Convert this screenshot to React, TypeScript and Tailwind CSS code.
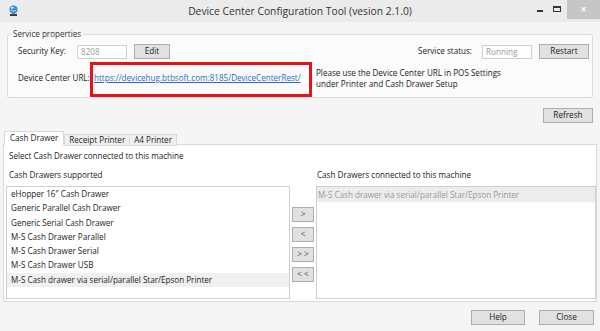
import React from "react";

const supported = [
  "eHopper 16\" Cash Drawer",
  "Generic Parallel Cash Drawer",
  "Generic Serial Cash Drawer",
  "M-S Cash Drawer Parallel",
  "M-S Cash Drawer Serial",
  "M-S Cash Drawer USB",
  "M-S Cash drawer via serial/parallel Star/Epson Printer",
];

function WinButton({ label, className = "" }: { label: string; className?: string }) {
  return (
    <button
      className={`h-[15px] bg-[#e1e1e1] border border-[#adadad] text-[#222] text-[8.2px] leading-none flex items-center justify-center ${className}`}
    >
      {label}
    </button>
  );
}

function AppIcon() {
  return (
    <svg width="11" height="12" viewBox="0 0 11 12">
      <rect x="2" y="9" width="7" height="2" fill="#3a3a3a" />
      <rect x="4.5" y="7" width="2" height="3" fill="#555" />
      <circle cx="5.5" cy="4.5" r="4" fill="#2f8fd8" />
      <path d="M3 3.5c1-1 2.5-1.2 3.5-.4M2.5 5.5c1.5.6 3.5.7 5.5 0" stroke="#bfe3ff" strokeWidth="0.9" fill="none" />
      <circle cx="4" cy="2.8" r="1" fill="#e8f5ff" />
    </svg>
  );
}

export default function App() {
  return (
    <div
      className="w-[600px] h-[331px] overflow-hidden flex flex-col bg-[#f5f5f5] text-[#222] text-[8.1px]"
      style={{ fontFamily: '"Open Sans", "Noto Sans", sans-serif' }}
    >
      {/* title bar */}
      <div className="h-[22px] shrink-0 bg-[#ebebeb] grid grid-cols-[1fr_auto_1fr]">
        <div className="pl-[8px] pt-[5px]">
          <AppIcon />
        </div>
        <div className="text-[10.3px] text-[#333] leading-[23px]">Device Center Configuration Tool (vesion 2.1.0)</div>
        <div className="flex justify-end items-start">
          <div className="w-[16px] h-[19px] flex items-center justify-center">
            <div className="w-[6px] h-[2px] bg-[#333] mt-[3px]" />
          </div>
          <div className="w-[18px] h-[19px] flex items-center justify-center">
            <div className="w-[8px] h-[6px] border border-[#333] border-t-2 -mt-[2px]" />
          </div>
          <div className="w-[33px] h-[19px] ml-[1px] bg-[#c6c6c6] flex items-center justify-center text-white text-[10px] font-bold">
            ×
          </div>
        </div>
      </div>

      <div className="flex-1 flex flex-col px-[3px]">
        {/* service properties */}
        <fieldset className="mt-[6px] mx-[4px] border border-[#dcdcdc] rounded-[2px] bg-[#fbfbfb]">
          <legend className="ml-[3px] px-[2px] leading-[12px] text-[#333]">Service properties</legend>
          <div className="relative pt-[4px] pb-[8px] pl-[10px] pr-[3px]">
            <div className="flex items-center h-[15px]">
              <span className="w-[59px]">Security Key:</span>
              <div className="w-[50px] h-[14px] border border-[#cfcfcf] bg-white text-[#9a9a9a] pl-[3px] leading-[12px]">8208</div>
              <WinButton label="Edit" className="w-[36px] ml-[7px]" />
              <div className="flex-1" />
              <span className="mr-[10px]">Service status:</span>
              <div className="w-[50px] h-[14px] border border-[#cfcfcf] bg-white text-[#9a9a9a] pl-[3px] leading-[12px]">Running</div>
              <WinButton label="Restart" className="w-[50px] ml-[7px]" />
            </div>
            <div className="flex items-center h-[22px] mt-[8px]">
              <span className="w-[76px]">Device Center URL:</span>
              <a className="text-[#2a6ac8] underline w-[222px]">https://devicehug.btbsoft.com:8185/DeviceCenterRest/</a>
              <div className="leading-[11px]">
                <div>Please use the Device Center URL in POS Settings</div>
                <div>under Printer and Cash Drawer Setup</div>
              </div>
            </div>
            <div className="absolute left-[82px] top-[22px] w-[222px] h-[35px] border-[3px] border-[#e3131b]" />
          </div>
        </fieldset>

        <div className="flex justify-end mt-[10px] mr-[4px]">
          <WinButton label="Refresh" className="w-[50px]" />
        </div>

        {/* tabs */}
        <div className="flex items-end h-[14px] mt-[8px] ml-[1px] relative z-10">
          <div className="h-[14px] px-[5px] bg-white border border-b-0 border-[#d9d9d9] leading-[12px]">Cash Drawer</div>
          <div className="h-[12px] px-[4px] bg-[#efefef] border border-[#d9d9d9] leading-[10px] mb-[-1px]">Receipt Printer</div>
          <div className="h-[12px] px-[4px] bg-[#efefef] border border-l-0 border-[#d9d9d9] leading-[10px] mb-[-1px]">A4 Printer</div>
        </div>
        <div className="-mt-px h-[158px] border border-[#d9d9d9] bg-white flex flex-col">
          <div className="pl-[5px] pt-[5px] leading-[12px]">Select Cash Drawer connected to this machine</div>
          <div className="flex mt-[7px] pl-[2px]">
            <div className="flex flex-col w-[284px]">
              <div className="pl-[3px] leading-[12px]">Cash Drawers supported</div>
              <div className="mt-[5px] h-[113px] border border-[#cfcfcf] bg-white">
                {supported.map((s, i) => (
                  <div
                    key={s}
                    className={`h-[14.3px] leading-[14.3px] pl-[4px] ${i === supported.length - 1 ? "bg-[#f0f0f0]" : ""}`}
                  >
                    {s}
                  </div>
                ))}
              </div>
            </div>
            <div className="flex flex-col gap-[5px] pt-[38px] ml-[2px] w-[22px]">
              <WinButton label=">" className="w-[22px] h-[14px] text-[7px] text-[#555]" />
              <WinButton label="<" className="w-[22px] h-[14px] text-[7px] text-[#555]" />
              <WinButton label="> >" className="w-[22px] h-[14px] text-[7px] text-[#555]" />
              <WinButton label="< <" className="w-[22px] h-[14px] text-[7px] text-[#555]" />
            </div>
            <div className="flex flex-col ml-[2px] flex-1">
              <div className="pl-[1px] leading-[12px]">Cash Drawers connected to this machine</div>
              <div className="mt-[5px] h-[113px] border border-[#cfcfcf] bg-white">
                <div className="h-[15px] leading-[15px] pl-[1px] bg-[#ececec] text-[#9a9a9a]">
                  M-S Cash drawer via serial/parallel Star/Epson Printer
                </div>
              </div>
            </div>
          </div>
        </div>

        <div className="flex justify-end gap-[14px] mt-[8px] mr-[3px]">
          <WinButton label="Help" className="w-[54px]" />
          <WinButton label="Close" className="w-[55px]" />
        </div>
      </div>
    </div>
  );
}
